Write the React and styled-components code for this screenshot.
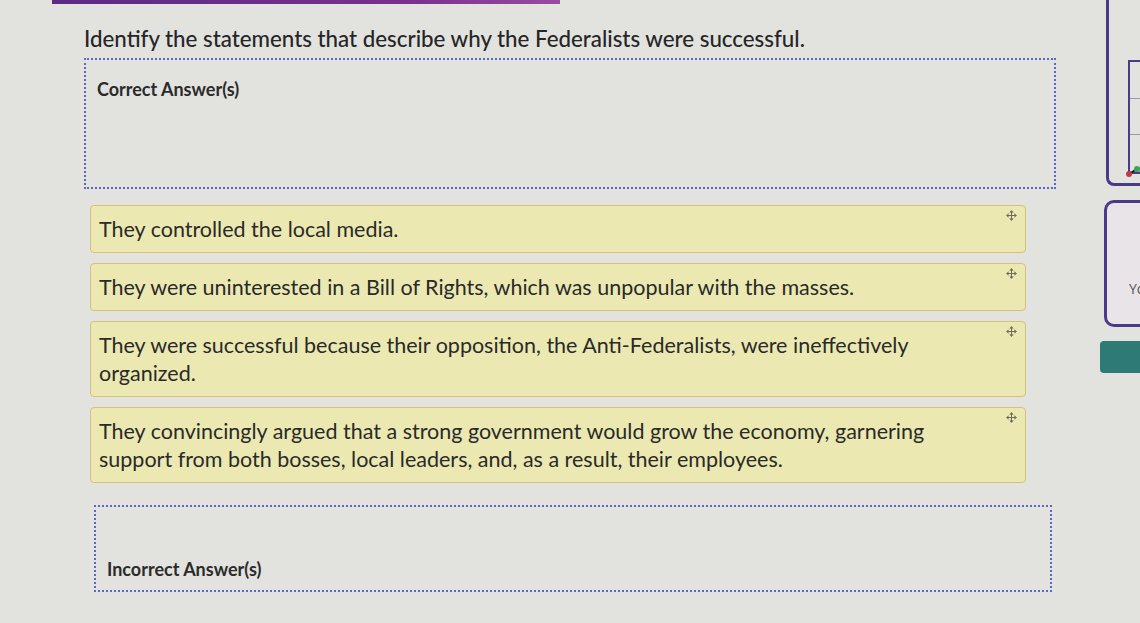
import React from "react";
import styled, { createGlobalStyle } from "styled-components";
import { Move } from "lucide-react";

const GlobalStyle = createGlobalStyle`
  html, body {
    margin: 0;
    padding: 0;
    background: #e2e2df;
    font-family: "Lato", "Open Sans", sans-serif;
    color: #2b2b2b;
  }
  #root {
    width: 1140px;
    height: 623px;
    overflow: hidden;
  }
`;

const Page = styled.div`
  position: relative;
  width: 1140px;
  height: 623px;
  overflow: hidden;
`;

const TopStrip = styled.div`
  height: 4px;
  width: 508px;
  margin-left: 52px;
  background: linear-gradient(90deg, #5b2a86, #7a2f8f 70%, #9a4aa2);
`;

const Layout = styled.div`
  display: flex;
  align-items: flex-start;
`;

const Main = styled.main`
  width: 968px;
  padding-left: 86px;
  flex-shrink: 0;
`;

const Title = styled.h1`
  margin: 20px 0 0 -2px;
  font-size: 22.3px;
  line-height: 30px;
  font-weight: 500;
  color: #262626;
`;

const DropZone = styled.section`
  box-sizing: border-box;
  width: ${(p) => p.$width}px;
  height: ${(p) => p.$height}px;
  margin-left: ${(p) => p.$indent || 0}px;
  margin-top: ${(p) => p.$top}px;
  border: 2px dotted #5a67c8;
  padding: 17px 11px 9px;
  display: flex;
  flex-direction: column;
  justify-content: ${(p) => (p.$bottom ? "flex-end" : "flex-start")};
`;

const ZoneLabel = styled.h2`
  margin: 0;
  font-size: 18px;
  line-height: 24px;
  font-weight: 700;
  color: #2b2b2b;
`;

const CardList = styled.div`
  display: flex;
  flex-direction: column;
  gap: 10px;
  margin-top: 16px;
  width: 936px;
  margin-left: 4px;
`;

const Card = styled.div`
  position: relative;
  box-sizing: border-box;
  width: 100%;
  padding: 9px 90px 9px 8px;
  background: #ebe9b1;
  border: 1px solid #d3c279;
  border-radius: 4px;
  font-size: 21.5px;
  line-height: 28px;
  color: #2a2a2a;
`;

const Handle = styled.span`
  position: absolute;
  top: 4px;
  right: 8px;
  display: flex;
  color: #6f6c5e;
`;

const Side = styled.aside`
  display: flex;
  flex-direction: column;
  margin-left: 48px;
  width: 120px;
  flex-shrink: 0;
`;

const ChartPanel = styled.div`
  box-sizing: border-box;
  height: 188px;
  margin-top: -6px;
  margin-left: 4px;
  border: 3px solid #4b3a86;
  border-top: none;
  border-right: none;
  border-radius: 0 0 0 8px;
  padding: 62px 0 0 19px;
`;

const ChartBox = styled.div`
  position: relative;
  height: 110px;
  border: 2px solid #4b3a86;
  border-right: none;
  display: flex;
  flex-direction: column;
`;

const GridRow = styled.div`
  flex: 1;
  border-bottom: 1px solid #9c98b0;
  &:last-child {
    border-bottom: none;
  }
`;

const ChartLine = styled.svg`
  position: absolute;
  left: -4px;
  bottom: -6px;
`;

const MessagePanel = styled.div`
  box-sizing: border-box;
  height: 127px;
  margin-top: 14px;
  margin-left: 2px;
  border: 3px solid #4b3a86;
  border-right: none;
  border-radius: 10px 0 0 10px;
  background: #e9e4e8;
  display: flex;
  align-items: flex-end;
  padding: 0 0 26px 22px;
  font-family: "Open Sans", sans-serif;
  font-size: 14px;
  color: #555;
`;

const ActionButton = styled.div`
  height: 32px;
  margin-top: 14px;
  margin-left: -2px;
  border-radius: 4px 0 0 4px;
  background: #2d7a77;
`;

const answers = [
  "They controlled the local media.",
  "They were uninterested in a Bill of Rights, which was unpopular with the masses.",
  "They were successful because their opposition, the Anti-Federalists, were ineffectively organized.",
  "They convincingly argued that a strong government would grow the economy, garnering support from both bosses, local leaders, and, as a result, their employees.",
];

export default function App() {
  return (
    <Page>
      <GlobalStyle />
      <TopStrip />
      <Layout>
        <Main>
          <Title>Identify the statements that describe why the Federalists were successful.</Title>
          <DropZone $width={972} $height={131} $top={4} $indent={-2}>
            <ZoneLabel>Correct Answer(s)</ZoneLabel>
          </DropZone>
          <CardList>
            {answers.map((text) => (
              <Card key={text}>
                {text}
                <Handle>
                  <Move size={11} strokeWidth={2.2} />
                </Handle>
              </Card>
            ))}
          </CardList>
          <DropZone $width={958} $height={87} $top={22} $indent={8} $bottom>
            <ZoneLabel>Incorrect Answer(s)</ZoneLabel>
          </DropZone>
        </Main>
        <Side>
          <ChartPanel>
            <ChartBox>
              <GridRow />
              <GridRow />
              <GridRow />
              <ChartLine width="24" height="14" viewBox="0 0 24 14">
                <path d="M3 10 L11 5 L24 4" stroke="#1d1d1d" strokeWidth="2" fill="none" />
                <circle cx="3" cy="10" r="3" fill="#c0394b" />
                <circle cx="11" cy="5" r="3" fill="#3aa655" />
              </ChartLine>
            </ChartBox>
          </ChartPanel>
          <MessagePanel>Yo</MessagePanel>
          <ActionButton />
        </Side>
      </Layout>
    </Page>
  );
}
